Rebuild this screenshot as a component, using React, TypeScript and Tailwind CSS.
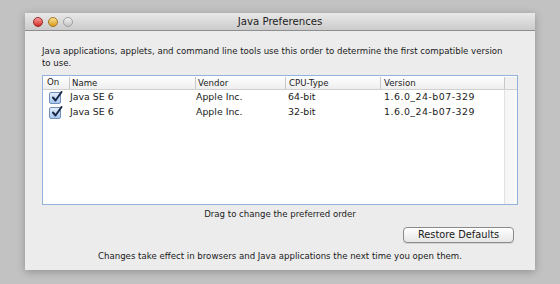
import React from 'react';

const rows = [
  { name: 'Java SE 6', vendor: 'Apple Inc.', cpu: '64-bit', version: '1.6.0_24-b07-329' },
  { name: 'Java SE 6', vendor: 'Apple Inc.', cpu: '32-bit', version: '1.6.0_24-b07-329' },
];

const cols = 'grid grid-cols-[26px_126px_90px_95px_124px_1fr]';

function Check() {
  return (
    <div className="w-[12px] h-[12px] rounded-[2px] border border-[#6f8fbf] bg-gradient-to-b from-[#e4eefb] to-[#a9c6ee] relative">
      <svg viewBox="0 0 12 12" className="absolute left-[1px] -top-[2px] w-[12px] h-[12px]">
        <path d="M2 6.5 L4.5 9.5 L10.5 1" fill="none" stroke="#1a2b4a" strokeWidth="2" strokeLinecap="round" strokeLinejoin="round" />
      </svg>
    </div>
  );
}

function Light({ from, to, border }: { from: string; to: string; border: string }) {
  return <div className={`w-[10px] h-[10px] rounded-full border ${border} bg-gradient-to-b ${from} ${to}`} />;
}

export default function App() {
  return (
    <div
      className="w-[560px] h-[284px] bg-[#c2c2c2] pt-[13px] pl-[25px] text-[#1a1a1a]"
      style={{ fontFamily: '"Lucida Grande", "DejaVu Sans", sans-serif' }}
    >
      <div className="w-[510px] h-[257px] bg-[#ececec] flex flex-col shadow-[0_2px_8px_rgba(0,0,0,0.25)]">
        {/* Title bar */}
        <div className="h-[18px] relative flex items-center bg-gradient-to-b from-[#e9e9e9] to-[#cbcbcb] border-b border-[#8e8e8e]">
          <div className="flex items-center gap-[5px] pl-[8px]">
            <Light from="from-[#f79a9a]" to="to-[#d11f1f]" border="border-[#9b2a2a]" />
            <Light from="from-[#fbe38a]" to="to-[#d99a10]" border="border-[#a4781e]" />
            <Light from="from-[#f2f2f2]" to="to-[#c4c4c4]" border="border-[#a0a0a0]" />
          </div>
          <div className="absolute inset-0 flex items-center justify-center text-[10.2px] text-[#222]">
            Java Preferences
          </div>
        </div>

        {/* Body */}
        <div className="flex-1 px-[17px] pt-[14px] flex flex-col text-[8.6px]">
          <p className="leading-[12px] max-w-[465px]">
            Java applications, applets, and command line tools use this order to determine the first compatible version
            to use.
          </p>

          <div className="mt-[6px] h-[130px] border border-[#93b1da] bg-white flex flex-col">
            <div className={`${cols} h-[14px] bg-gradient-to-b from-white to-[#eeeeee] border-b border-[#d0d0d0] leading-[12px]`}>
              <div className="pl-[4px]">On</div>
              <div className="border-l border-[#c8c8c8] pl-[2px] my-[1px]">Name</div>
              <div className="border-l border-[#c8c8c8] pl-[2px] my-[1px]">Vendor</div>
              <div className="border-l border-[#c8c8c8] pl-[3px] my-[1px]">CPU-Type</div>
              <div className="border-l border-[#c8c8c8] pl-[3px] my-[1px]">Version</div>
              <div className="border-l border-[#c8c8c8] my-[1px] bg-[#f0f0f0]" />
            </div>
            <div className="flex-1 flex">
              <div className="flex-1 flex flex-col text-[9.4px]">
                {rows.map((r, i) => (
                  <div key={i} className={`${cols} h-[15px] items-center`}>
                    <div className="pl-[6px]">
                      <Check />
                    </div>
                    <div className="pl-[1px]">{r.name}</div>
                    <div className="pl-[1px]">{r.vendor}</div>
                    <div className="pl-[3px]">{r.cpu}</div>
                    <div className="pl-[4px] tracking-[0.5px]">{r.version}</div>
                    <div />
                  </div>
                ))}
              </div>
              <div className="w-[13px] border-l border-[#e2e2e2] bg-gradient-to-r from-[#f4f4f4] to-[#fafafa]" />
            </div>
          </div>

          <div className="text-center mt-[3px] leading-[12px]">Drag to change the preferred order</div>

          <div className="flex justify-end mt-[7px] pr-[4px]">
            <button className="w-[111px] h-[16px] rounded-[4px] border border-[#8a8a8a] bg-gradient-to-b from-white to-[#e6e6e6] text-[9.8px] leading-[14px] shadow-[0_1px_0_rgba(0,0,0,0.1)]">
              Restore Defaults
            </button>
          </div>

          <div className="text-center mt-[7px] leading-[12px]">
            Changes take effect in browsers and Java applications the next time you open them.
          </div>
        </div>
      </div>
    </div>
  );
}
